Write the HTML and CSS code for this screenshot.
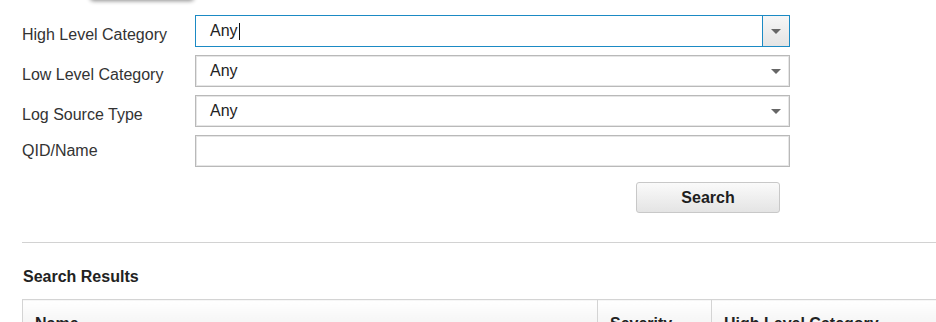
FILE: index.html
```html
<!DOCTYPE html>
<html lang="en">
<head>
    <meta charset="UTF-8">
    <title>Event Search</title>
    <link rel="stylesheet" href="styles.css">
</head>
<body>

<div class="page">
    <div class="tab-shadow"></div>

    <div class="filter-form">
        <label class="field-label for-combo">High Level Category</label>
        <div class="combo focused">
            <span class="combo-text">Any<span class="caret"></span></span>
            <span class="combo-btn"><span class="arrow"></span></span>
        </div>

        <label class="field-label for-combo">Low Level Category</label>
        <div class="combo">
            <span class="combo-text">Any</span>
            <span class="combo-btn"><span class="arrow"></span></span>
        </div>

        <label class="field-label for-combo">Log Source Type</label>
        <div class="combo">
            <span class="combo-text">Any</span>
            <span class="combo-btn"><span class="arrow"></span></span>
        </div>

        <label class="field-label" for="qidName">QID/Name</label>
        <input type="text" id="qidName" class="text-field">
    </div>

    <div class="actions">
        <button type="button" class="search-button">Search</button>
    </div>

    <hr class="divider">

    <h3 class="results-title">Search Results</h3>

    <table class="results-table">
        <thead>
            <tr>
                <th class="col-name">Name</th>
                <th class="col-severity">Severity</th>
                <th>High Level Category</th>
            </tr>
        </thead>
    </table>
</div>

</body>
</html>
```

FILE: styles.css
```css
html, body {
    margin: 0;
    padding: 0;
    background: #fff;
    overflow: hidden;
}

body {
    font-family: "Liberation Sans", Arial, sans-serif;
    font-size: 16px;
    color: #333;
}

.page {
    position: relative;
    padding-left: 22px;
}

.tab-shadow {
    position: absolute;
    top: -30px;
    left: 90px;
    width: 104px;
    height: 30px;
    background: #fff;
    border-radius: 0 0 4px 4px;
    box-shadow: 0 1px 4px rgba(0, 0, 0, 0.45);
}

.filter-form {
    display: grid;
    grid-template-columns: 173px 595px;
    row-gap: 8px;
    padding-top: 15px;
}

.field-label {
    align-self: center;
    color: #333;
}

.field-label.for-combo {
    margin-top: 7px;
}

.combo {
    display: flex;
    height: 32px;
    box-sizing: border-box;
    border: 1px solid #b9b9b9;
    box-shadow: inset 0 0 0 1px #e6e6e6;
    background: #fff;
}

.combo.focused {
    border-color: #1b8ac4;
    box-shadow: none;
}

.combo-text {
    flex: 1;
    display: flex;
    align-items: center;
    padding-left: 14px;
    color: #222;
}

.caret {
    display: inline-block;
    width: 1px;
    height: 17px;
    margin-left: 1px;
    background: #111;
}

.combo-btn {
    width: 26px;
    display: flex;
    align-items: center;
    justify-content: center;
}

.combo.focused .combo-btn {
    border-left: 1px solid #1b8ac4;
    background: linear-gradient(#f6f6f6, #e4e4e4);
}

.arrow {
    width: 0;
    height: 0;
    border-left: 5px solid transparent;
    border-right: 5px solid transparent;
    border-top: 5px solid #666;
}

.text-field {
    height: 32px;
    box-sizing: border-box;
    margin: 0;
    border: 1px solid #b9b9b9;
    box-shadow: inset 0 0 0 1px #e6e6e6;
    outline: none;
    font: inherit;
}

.actions {
    width: 768px;
    display: flex;
    justify-content: flex-end;
    margin-top: 15px;
}

.search-button {
    width: 144px;
    height: 31px;
    margin-right: 10px;
    border: 1px solid #c8c8c8;
    border-radius: 3px;
    background: linear-gradient(#fafafa, #e4e4e4);
    font-family: inherit;
    font-size: 16px;
    font-weight: bold;
    color: #1e1e1e;
    cursor: pointer;
}

.divider {
    margin: 29px 0 0 0;
    border: none;
    border-top: 1px solid #d2d2d2;
}

.results-title {
    margin: 24px 0 0 1px;
    font-size: 16px;
    line-height: 20px;
    font-weight: bold;
    color: #222;
}

.results-table {
    margin-top: 12px;
    width: 1000px;
    border-collapse: collapse;
}

.results-table th {
    text-align: left;
    font-weight: bold;
    color: #222;
    padding: 15px 12px 8px;
    border: 1px solid #d4d4d4;
    background: linear-gradient(#fff, #ededed);
}

.col-name {
    width: 550px;
}

.col-severity {
    width: 89px;
}
```
